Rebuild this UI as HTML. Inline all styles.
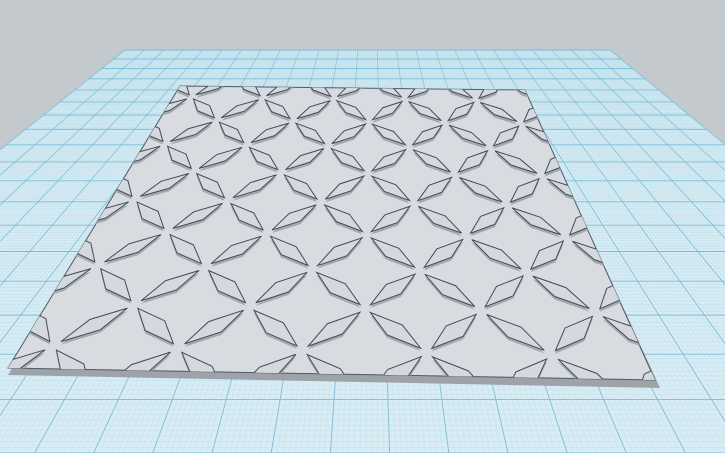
<!DOCTYPE html>
<html><head><meta charset="utf-8"><style>
html,body{margin:0;padding:0;width:725px;height:453px;overflow:hidden;background:#c4c9ce}
svg{display:block}
</style></head><body>
<svg id="s" width="725" height="453" viewBox="0 0 725 453" xmlns="http://www.w3.org/2000/svg">
<defs><clipPath id="cp"><polygon points="180,86 525,90 655,380 8,368"/></clipPath></defs>
<rect width="725" height="453" fill="#c4c9ce"/>
<polygon points="125,50 610,50 1100,453 -380,453" fill="#d9ecf4"/>
<g id="grid"></g>
<polygon points="180,88 525,92 660,388 8,375" fill="#9ea3a9"/>
<polygon points="180,86 525,90 655,380 8,368" fill="#d8dbdf" stroke="#4d5a6a" stroke-width="1"/>
<g id="dia" clip-path="url(#cp)"></g>
</svg>
<script>
var NS="http://www.w3.org/2000/svg";
var g=document.getElementById('grid');
function line(x1,y1,x2,y2,c,w){var l=document.createElementNS(NS,'line');l.setAttribute('x1',x1);l.setAttribute('y1',y1);l.setAttribute('x2',x2);l.setAttribute('y2',y2);l.setAttribute('stroke',c);l.setAttribute('stroke-width',w);g.appendChild(l);}
var N=250;
for(var i=0;i<=N;i++){var t=i/N;var xt=125+485*t,xb=-380+1480*t;
 var maj=i%10==0;line(xt,50,xb,453,maj?'#78bdd6':'#b3dbea',maj?0.9:0.35);}
var M=180;
for(var k=0;k<=M;k++){var t=k/M;var f=t/(2.6-1.6*t);var y=50+403*f;
 var xl=125+(-380-125)*f,xr=610+(1100-610)*f;var maj=k%10==0;line(xl,y,xr,y,maj?'#78bdd6':'#b3dbea',maj?0.9:0.35);}
var d=document.getElementById('dia');
function P(u,v){var tx=180+(525-180)*u,bx=8+(655-8)*u;var ty=86+4*u,by=368+12*u;var vv=v/(1.5-0.5*v);return [tx+(bx-tx)*vv,ty+(by-ty)*vv];}
var C=10,R=9;
for(var i=0;i<=C;i++)for(var j=0;j<=R;j++){
 var u=i/C,v=j/R;var s=((i+j)%2==0)?1:-1;var h=0.041,w=0.013;
 var pts=[[u-h,v-s*h*1.1],[u+w,v-w*s],[u+h,v+s*h*1.1],[u-w,v+w*s]];
 var sc=pts.map(function(p){return P(p[0],p[1])});
 var sh=document.createElementNS(NS,'polygon');
 sh.setAttribute('points',sc.map(function(p){return p[0]+','+(p[1]+3)}).join(' '));
 sh.setAttribute('fill','#a4a9af');d.appendChild(sh);
 var pg=document.createElementNS(NS,'polygon');
 pg.setAttribute('points',sc.map(function(p){return p[0]+','+p[1]}).join(' '));
 pg.setAttribute('fill','#d5d8dc');pg.setAttribute('stroke','#3f4c5c');pg.setAttribute('stroke-width','1');d.appendChild(pg);}
</script>
</body></html>
